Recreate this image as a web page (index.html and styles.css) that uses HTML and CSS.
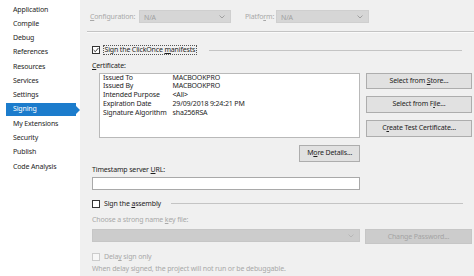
FILE: index.html
```html
<!DOCTYPE html>
<html lang="en">
  <head>
    <meta charset="UTF-8" />
    <title>Signing</title>
    <link rel="stylesheet" href="styles.css">
  </head>
  <body>
    <div class="page">
      <ul class="nav">
        <li>Application</li>
        <li>Compile</li>
        <li>Debug</li>
        <li>References</li>
        <li>Resources</li>
        <li>Services</li>
        <li>Settings</li>
        <li class="active">Signing</li>
        <li>My Extensions</li>
        <li>Security</li>
        <li>Publish</li>
        <li>Code Analysis</li>
      </ul>

      <div class="main">
        <div class="top-row">
          <span class="top-label label-config"><u>C</u>onfiguration:</span>
          <div class="combo combo-config">N/A
            <svg class="chev" width="6" height="4" viewBox="0 0 6 4"><path d="M0.5 0.5 L3 3 L5.5 0.5" fill="none" stroke="#9a9a9a" stroke-width="0.9"/></svg>
          </div>
          <span class="top-label label-platform">Platfo<u>r</u>m:</span>
          <div class="combo combo-platform">N/A
            <svg class="chev" width="6" height="4" viewBox="0 0 6 4"><path d="M0.5 0.5 L3 3 L5.5 0.5" fill="none" stroke="#9a9a9a" stroke-width="0.9"/></svg>
          </div>
        </div>
        <div class="sep"></div>

        <div class="check-row row-manifest">
          <span class="box checked">
            <svg width="6" height="6" viewBox="0 0 6 6"><path d="M0.6 3 L2.3 4.7 L5.4 1" fill="none" stroke="#222" stroke-width="0.9"/></svg>
          </span>
          <span class="focus">Sign the ClickOnce <u>m</u>anifests</span>
          <span class="line"></span>
        </div>

        <div class="label cert-label"><u>C</u>ertificate:</div>
        <div class="cert">
          <div class="cert-box">
            <div class="cert-row"><span class="k">Issued To</span><span>MACBOOKPRO</span></div>
            <div class="cert-row"><span class="k">Issued By</span><span>MACBOOKPRO</span></div>
            <div class="cert-row"><span class="k">Intended Purpose</span><span>&lt;All&gt;</span></div>
            <div class="cert-row"><span class="k">Expiration Date</span><span>29/09/2018 9:24:21 PM</span></div>
            <div class="cert-row"><span class="k">Signature Algorithm</span><span>sha256RSA</span></div>
          </div>
          <div class="cert-buttons">
            <div class="btn">Select from <u>S</u>tore...</div>
            <div class="btn">Select from F<u>i</u>le...</div>
            <div class="btn">C<u>r</u>eate Test Certificate...</div>
          </div>
        </div>
        <div class="more-row">
          <div class="btn btn-more">M<u>o</u>re Details...</div>
        </div>

        <div class="label ts-label">Timestamp server <u>U</u>RL:</div>
        <div class="input"></div>

        <div class="check-row row-assembly">
          <span class="box"></span>
          <span class="plain">Sign the <u>a</u>ssembly</span>
          <span class="line"></span>
        </div>

        <div class="label disabled key-label">Choose a strong name <u>k</u>ey file:</div>
        <div class="key-row">
          <div class="combo combo-key">
            <svg class="chev" width="6" height="4" viewBox="0 0 6 4"><path d="M0.5 0.5 L3 3 L5.5 0.5" fill="none" stroke="#b4b4b4" stroke-width="0.9"/></svg>
          </div>
          <div class="btn btn-disabled">Change Password...</div>
        </div>

        <div class="check-row row-delay disabled">
          <span class="box box-disabled"></span>
          <span class="plain">Dela<u>y</u> sign only</span>
        </div>
        <div class="label disabled note">When delay signed, the project will not run or be debuggable.</div>
      </div>
    </div>
  </body>
</html>
```

FILE: styles.css
```css
body {
  margin: 0;
  background: #f0f0f0;
  font-family: "Noto Sans", "Open Sans", sans-serif;
  font-size: 7px;
  letter-spacing: -0.15px;
  color: #1e1e1e;
  overflow: hidden;
  white-space: nowrap;
}

u {
  text-decoration-thickness: 0.6px;
  text-underline-offset: 1px;
}

.page {
  display: flex;
  width: 474px;
  height: 276px;
}

/* left tab list */
.nav {
  list-style: none;
  margin: 0;
  padding: 3.5px 0 0 0;
  width: 80px;
  flex: none;
  background: #fff;
}

.nav li {
  height: 12.6px;
  line-height: 12.6px;
  margin: 0 4px 1.7px 6px;
  padding-left: 7px;
  position: relative;
}

.nav li.active {
  background: #1c7ccc;
  color: #fff;
}

.nav li.active::after {
  content: "";
  position: absolute;
  right: -4px;
  top: 2.3px;
  border-left: 4px solid #1c7ccc;
  border-top: 4px solid transparent;
  border-bottom: 4px solid transparent;
}

/* right pane */
.main {
  flex: 1;
  padding: 9px 2px 0 12px;
  display: flex;
  flex-direction: column;
}

.top-row {
  display: flex;
  align-items: center;
  height: 14px;
  margin-left: -2px;
  color: #a8a8a8;
}

.label-config {
  width: 49px;
}

.label-platform {
  margin-left: 14px;
  width: 31px;
}

.combo {
  position: relative;
  height: 13px;
  line-height: 13px;
  box-sizing: border-box;
  background: #d6d6d6;
  border: 1px solid #cfcfcf;
  padding-left: 4px;
  color: #a0a0a0;
}

.combo-config {
  width: 92px;
}

.combo-platform {
  width: 93px;
}

.chev {
  position: absolute;
  right: 5px;
  top: 4px;
}

.sep {
  margin: 8px -2px 0 -5px;
  border-top: 1px solid #c4c4c4;
  border-bottom: 1px solid #fafafa;
}

.check-row {
  display: flex;
  align-items: center;
  height: 10px;
}

.row-manifest {
  margin-top: 12px;
}

.box {
  width: 8px;
  height: 8px;
  box-sizing: border-box;
  border: 1px solid #333;
  background: #fff;
  display: flex;
  align-items: center;
  justify-content: center;
  flex: none;
}

.box-disabled {
  border-color: #cccccc;
  background: #f7f7f7;
}

.focus {
  margin-left: 2.5px;
  padding: 0 1px;
  border: 1px dotted #555;
  line-height: 8px;
}

.plain {
  margin-left: 4px;
}

.line {
  flex: 1;
  height: 0;
  border-top: 1px solid #c4c4c4;
  margin: 0 10px 0 12px;
}

.row-assembly .line {
  margin: 0 9px 0 10px;
}

.label {
  height: 10px;
  line-height: 10px;
}

.disabled {
  color: #a8a8a8;
}

.cert-label {
  margin-top: 5.5px;
}

.cert {
  display: flex;
  margin-top: 2px;
}

.cert-box {
  width: 261px;
  height: 65.6px;
  margin-left: 7px;
  box-sizing: border-box;
  background: #fff;
  border: 1px solid #b9b9b9;
  padding: 0 0 0 3px;
}

.cert-row {
  display: flex;
  height: 8.8px;
  line-height: 8.8px;
}

.cert-row .k {
  width: 69.5px;
}

.cert-buttons {
  margin-left: 6px;
  display: flex;
  flex-direction: column;
  gap: 7.4px;
}

.btn {
  width: 106px;
  height: 16.6px;
  line-height: 14.6px;
  box-sizing: border-box;
  background: #e1e1e1;
  border: 1px solid #adadad;
  text-align: center;
}

.more-row {
  display: flex;
  margin-top: 6.7px;
}

.btn-more {
  margin-left: 207.3px;
  width: 60.7px;
  height: 17px;
}

.ts-label {
  margin-top: 3px;
}

.input {
  width: 268px;
  height: 13px;
  margin-top: 2px;
  box-sizing: border-box;
  background: #fff;
  border: 1px solid #a9a9a9;
}

.row-assembly {
  margin-top: 9px;
}

.key-label {
  margin-top: 6px;
}

.key-row {
  display: flex;
  align-items: flex-start;
  margin-top: 4px;
}

.combo-key {
  width: 268px;
  background: #cccccc;
  border-color: #c6c6c6;
}

.btn-disabled {
  margin-left: 5px;
  width: 107px;
  height: 15px;
  line-height: 13px;
  background: #cccccc;
  border-color: #c6c6c6;
  color: #a4a4a4;
}

.row-delay {
  margin-top: 8px;
}

.note {
  margin-top: 2.5px;
}
```
